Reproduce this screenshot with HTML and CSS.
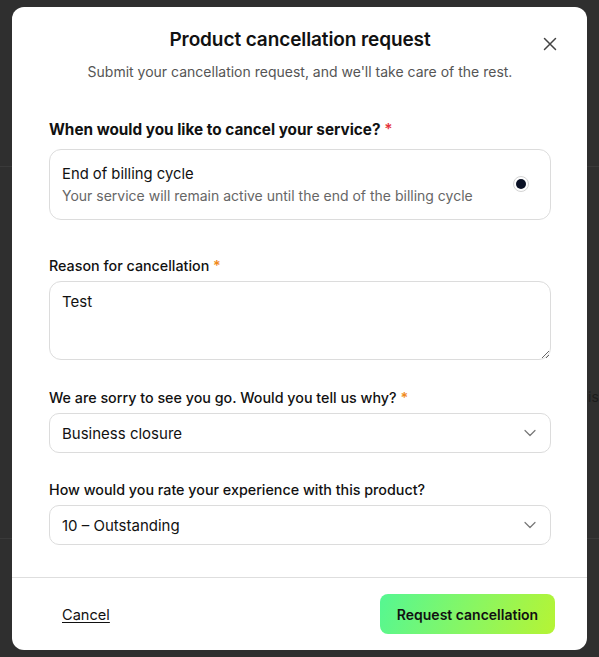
FILE: index.html
```html
<!DOCTYPE html>
<html lang="en">
<head>
<meta charset="utf-8">
<title>Product cancellation request</title>
<link rel="stylesheet" href="styles.css">
</head>
<body>
<div class="backdrop" aria-hidden="true"><span class="backdrop-text">is</span></div>
<div class="modal" role="dialog" aria-labelledby="title">
  <header class="modal-header">
    <h1 id="title" class="title">Product cancellation request</h1>
    <p class="subtitle">Submit your cancellation request, and we'll take care of the rest.</p>
    <button class="close" aria-label="Close">
      <svg width="14" height="14" viewBox="0 0 14 14"><path d="M1.5 1.5 L12.5 12.5 M12.5 1.5 L1.5 12.5" stroke="#444" stroke-width="1.5" stroke-linecap="round" fill="none"/></svg>
    </button>
  </header>
  <div class="modal-body">
    <div class="field field-first">
      <div class="label label-strong">When would you like to cancel your service? <span class="req red">*</span></div>
      <label class="radio-card">
        <div class="radio-text">
          <div class="radio-title">End of billing cycle</div>
          <div class="radio-sub">Your service will remain active until the end of the billing cycle</div>
        </div>
        <span class="radio"><span class="radio-dot"></span></span>
      </label>
    </div>
    <div class="field field-reason">
      <div class="label">Reason for cancellation <span class="req orange">*</span></div>
      <textarea class="textarea">Test</textarea>
    </div>
    <div class="field field-why">
      <div class="label">We are sorry to see you go. Would you tell us why? <span class="req orange">*</span></div>
      <div class="select"><span>Business closure</span>
        <svg width="12" height="8" viewBox="0 0 12 8"><path d="M1 1.5 L6 6.5 L11 1.5" stroke="#777" stroke-width="1.2" fill="none" stroke-linecap="round" stroke-linejoin="round"/></svg>
      </div>
    </div>
    <div class="field field-rate">
      <div class="label">How would you rate your experience with this product?</div>
      <div class="select"><span>10 – Outstanding</span>
        <svg width="12" height="8" viewBox="0 0 12 8"><path d="M1 1.5 L6 6.5 L11 1.5" stroke="#777" stroke-width="1.2" fill="none" stroke-linecap="round" stroke-linejoin="round"/></svg>
      </div>
    </div>
  </div>
  <footer class="modal-footer">
    <a class="cancel" href="#">Cancel</a>
    <button class="primary">Request cancellation</button>
  </footer>
</div>
</body>
</html>
```
FILE: styles.css
```css
html, body {
  margin: 0;
  padding: 0;
}
body {
  width: 599px;
  height: 657px;
  overflow: hidden;
  background-color: #2f2f2f;
  background-image:
    linear-gradient(#3a3a3a, #3a3a3a),
    linear-gradient(#3a3a3a, #3a3a3a);
  background-size: 100% 1px, 100% 1px;
  background-position: 0 166px, 0 538px;
  background-repeat: no-repeat;
  font-family: Inter, "Liberation Sans", Arial, sans-serif;
  color: #111;
  position: relative;
}
.backdrop {
  position: absolute;
  inset: 0;
  z-index: 0;
}
.backdrop-text {
  position: absolute;
  left: 588px;
  top: 388px;
  font-size: 14px;
  color: #1c1c1c;
}
.modal {
  position: relative;
  z-index: 1;
  box-sizing: border-box;
  margin: 7px 0 0 12px;
  width: 575px;
  height: 643px;
  background: #fff;
  border-radius: 12px;
  display: flex;
  flex-direction: column;
  overflow: hidden;
}
.modal-header {
  position: relative;
  padding: 21px 36px 0 37px;
  text-align: center;
}
.title {
  margin: 0;
  font-size: 19px;
  line-height: 24px;
  font-weight: 600;
  letter-spacing: -0.1px;
  color: #111;
}
.subtitle {
  margin: 10px 0 0;
  font-size: 14px;
  line-height: 20px;
  color: #555;
}
.close {
  position: absolute;
  top: 29px;
  right: 29px;
  width: 16px;
  height: 16px;
  padding: 0;
  border: 0;
  background: none;
  display: flex;
  align-items: center;
  justify-content: center;
}
.modal-body {
  padding: 0 36px 0 37px;
  flex: 1;
}
.field {
  display: flex;
  flex-direction: column;
}
.field-first { margin-top: 38px; }
.field-reason { margin-top: 36px; }
.field-why { margin-top: 28px; }
.field-rate { margin-top: 27px; }
.label {
  font-size: 14.3px;
  line-height: 20px;
  font-weight: 500;
  color: #111;
}
.label-strong {
  font-size: 15.3px;
  font-weight: 700;
}
.req { font-weight: 600; }
.red { color: #e5343d; }
.orange { color: #f08a1c; }
.field-first .label { margin-bottom: 9px; }
.field-reason .label { margin-bottom: 5px; }
.field-why .label, .field-rate .label { margin-bottom: 5px; }
.radio-card {
  box-sizing: border-box;
  height: 71px;
  border: 1px solid #dcdcdc;
  border-radius: 12px;
  padding: 13px 21px 12px 12px;
  display: flex;
  align-items: center;
  justify-content: space-between;
}
.radio-title {
  font-size: 14.8px;
  line-height: 22px;
  color: #111;
}
.radio-sub {
  font-size: 14px;
  line-height: 22px;
  color: #666;
}
.radio {
  box-sizing: border-box;
  width: 16px;
  height: 16px;
  border-radius: 50%;
  border: 1px solid #d4d4d4;
  display: flex;
  align-items: center;
  justify-content: center;
  margin-top: -2px;
}
.radio-dot {
  width: 10px;
  height: 10px;
  border-radius: 50%;
  background: #0b1226;
}
.textarea {
  box-sizing: border-box;
  width: 100%;
  height: 79px;
  border: 1px solid #dcdcdc;
  border-radius: 12px;
  padding: 9px 12px;
  font-family: inherit;
  font-size: 15px;
  line-height: 22px;
  color: #111;
  resize: vertical;
  outline: none;
  margin: 0;
  display: block;
}
.select {
  box-sizing: border-box;
  height: 40px;
  border: 1px solid #dcdcdc;
  border-radius: 10px;
  padding: 0 14px 0 12px;
  display: flex;
  align-items: center;
  justify-content: space-between;
  font-size: 15px;
  color: #111;
}
.modal-footer {
  border-top: 1px solid #dedede;
  padding: 16px 32px 16px 50px;
  display: flex;
  align-items: center;
  justify-content: space-between;
}
.cancel {
  font-size: 14.6px;
  line-height: 20px;
  margin-top: 2px;
  color: #111;
  text-decoration: underline;
  text-underline-offset: 2px;
}
.primary {
  box-sizing: border-box;
  width: 175px;
  height: 40px;
  border: 0;
  border-radius: 8px;
  background: linear-gradient(110deg, #55f792 0%, #8cf65f 55%, #b6f434 100%);
  font-family: inherit;
  font-size: 14px;
  font-weight: 600;
  color: #111;
  padding: 0;
}
```
